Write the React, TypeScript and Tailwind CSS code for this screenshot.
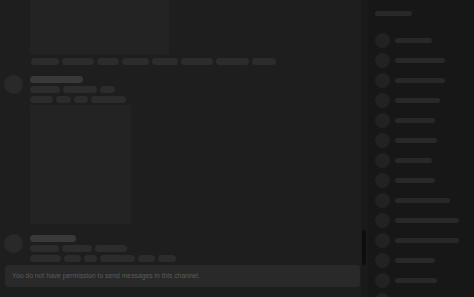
import React from "react";

const Pill = ({ w, c = "bg-[#2c2c2c]", h = "h-[7px]" }: { w: number; c?: string; h?: string }) => (
  <div className={`${h} ${c} rounded-full shrink-0`} style={{ width: w }} />
);

const Row = ({ widths }: { widths: number[] }) => (
  <div className="flex gap-[3px]">
    {widths.map((w, i) => (
      <Pill key={i} w={w} />
    ))}
  </div>
);

const members = [37, 50, 50, 45, 40, 42, 37, 40, 55, 64, 64, 40, 42, 38];

export default function App() {
  return (
    <div
      className="w-[474px] h-[297px] overflow-hidden flex bg-[#1e1e1e]"
      style={{ fontFamily: '"Liberation Sans", Arial, sans-serif' }}
    >
      {/* main */}
      <div className="w-[361px] shrink-0 flex flex-col">
        <div className="ml-[30px] w-[139px] h-[54px] bg-[#232323]" />
        <div className="ml-[31px] mt-[4px]">
          <Row widths={[28, 32, 22, 27, 26, 32, 33, 24]} />
        </div>

        {/* message 2 */}
        <div className="flex mt-[10px] pl-[4px] gap-[7px]">
          <div className="w-[19px] h-[19px] rounded-full bg-[#292929] shrink-0" />
          <div className="flex flex-col pt-[1px]">
            <Pill w={53} c="bg-[#393939]" />
            <div className="mt-[3px]">
              <Row widths={[30, 34, 15]} />
            </div>
            <div className="mt-[3px]">
              <Row widths={[23, 15, 14, 35]} />
            </div>
            <div className="mt-[2px] w-[101px] h-[119px] bg-[#232323]" />
          </div>
        </div>

        {/* message 3 */}
        <div className="flex mt-[10px] pl-[4px] gap-[7px]">
          <div className="w-[19px] h-[19px] rounded-full bg-[#292929] shrink-0" />
          <div className="flex flex-col pt-[1px]">
            <Pill w={46} c="bg-[#393939]" />
            <div className="mt-[3px]">
              <Row widths={[29, 30, 32]} />
            </div>
            <div className="mt-[3px]">
              <Row widths={[31, 17, 13, 35, 17, 18]} />
            </div>
          </div>
        </div>

        {/* input */}
        <div className="mt-[3px] ml-[5px] mr-[1px] h-[22px] rounded-[4px] bg-[#292929] flex items-center pl-[7px]">
          <span className="text-[6.8px] text-[#5b5b5b] whitespace-nowrap">
            You do not have permission to send messages in this channel.
          </span>
        </div>
      </div>

      {/* scrollbar strip */}
      <div className="w-[7px] shrink-0 bg-[#1a1a1a] flex flex-col">
        <div className="mt-[230px] ml-[1px] w-[4px] h-[35px] rounded-full bg-[#0e0e0e]" />
      </div>

      {/* members */}
      <div className="flex-1 bg-[#171717] flex flex-col pl-[7px]">
        <div className="mt-[11px]">
          <Pill w={37} h="h-[5px]" c="bg-[#292929]" />
        </div>
        <div className="mt-[17px] flex flex-col gap-[5px]">
          {members.map((w, i) => (
            <div key={i} className="flex items-center gap-[5px]">
              <div className="w-[15px] h-[15px] rounded-full bg-[#222222] shrink-0" />
              <Pill w={w} h="h-[5px]" c="bg-[#282828]" />
            </div>
          ))}
        </div>
      </div>
    </div>
  );
}
